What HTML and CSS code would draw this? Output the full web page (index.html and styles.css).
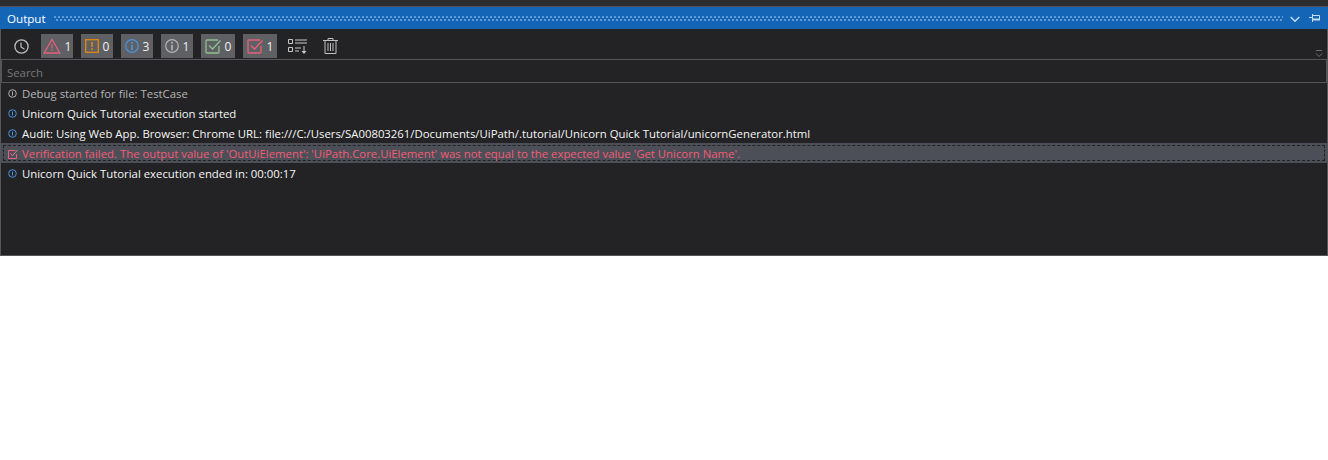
FILE: index.html
```html
<!DOCTYPE html>
<html lang="en">
<head>
<meta charset="utf-8">
<title>Output</title>
<link rel="stylesheet" href="styles.css">
</head>
<body>
<div class="panel">
  <div class="topstrip"></div>
  <header class="titlebar">
    <span class="title">Output</span>
    <span class="grip"></span>
    <svg class="chev" width="10" height="7" viewBox="0 0 10 7"><path d="M.7 1L5 5.300L9.300 1" fill="none" stroke="#c4dcf3" stroke-width="1.4"/></svg>
    <svg class="pin" width="11" height="8" viewBox="0 0 11 8"><path d="M0 3.500H3M3.500 0V8M3.500 1.500H10.500V5.500" fill="none" stroke="#c4dcf3"/><path d="M3.500 4.500H11V6.500H3.500z" fill="#c4dcf3"/></svg>
  </header>
  <div class="toolbar">
    <svg class="clock" width="15" height="15" viewBox="0 0 15 15"><circle cx="7.500" cy="7.500" r="6.600" fill="none" stroke="#c0c0c0" stroke-width="1.300"/><path d="M7 3.500V8L10.500 10.200" fill="none" stroke="#c0c0c0" stroke-width="1.200"/></svg>
    <button class="filter w32"><svg width="18" height="16" viewBox="0 0 18 16"><path d="M9 1.300L16.800 15H1.200Z" fill="none" stroke="#e8607a" stroke-width="1.300"/><path d="M9 6V10.500M9 11.500V13" stroke="#e8607a" stroke-width="1.200"/></svg><span>1</span></button>
    <button class="filter w32"><svg width="14" height="14" viewBox="0 0 14 14"><rect x=".7" y=".7" width="12.600" height="12.600" fill="none" stroke="#e8860c" stroke-width="1.300"/><path d="M7 3V8M7 9.300V11" stroke="#e8860c" stroke-width="1.600"/></svg><span>0</span></button>
    <button class="filter w32"><svg width="14" height="14" viewBox="0 0 14 14"><circle cx="7" cy="7" r="6.300" fill="none" stroke="#4a94da" stroke-width="1.200"/><path d="M7 2.800V4.500M7 5.800V11.200" stroke="#4a94da" stroke-width="1.700"/></svg><span>3</span></button>
    <button class="filter w32"><svg width="14" height="14" viewBox="0 0 14 14"><circle cx="7" cy="7" r="6.300" fill="none" stroke="#b4b4b4" stroke-width="1.200"/><path d="M7 2.800V4.500M7 5.800V11.200" stroke="#b4b4b4" stroke-width="1.700"/></svg><span>1</span></button>
    <button class="filter w34"><svg width="16" height="15" viewBox="0 0 16 15"><path d="M14 7V13A1 1 0 0 1 13 14H2A1 1 0 0 1 1 13V2A1 1 0 0 1 2 1H13" fill="none" stroke="#8fc08f" stroke-width="1.300"/><path d="M4 6.500L7.500 10L15.500 1.500" fill="none" stroke="#8fc08f" stroke-width="1.300"/></svg><span>0</span></button>
    <button class="filter w34"><svg width="16" height="15" viewBox="0 0 16 15"><path d="M14 7V13A1 1 0 0 1 13 14H2A1 1 0 0 1 1 13V2A1 1 0 0 1 2 1H13" fill="none" stroke="#e8607a" stroke-width="1.300"/><path d="M4 6.500L7.500 10L15.500 1.500" fill="none" stroke="#e8607a" stroke-width="1.300"/></svg><span>1</span></button>
    <svg class="sort" width="20" height="17" viewBox="0 0 20 17"><path d="M.5 1.500h4v4h-4zM.5 9.500h4v4h-4z" fill="none" stroke="#c8c8c8"/><path d="M7 2H19M7 5H19M7 10H13M7 13H11M16 8V14" stroke="#c8c8c8" fill="none"/><path d="M13.500 13H18.500L16 16Z" fill="#c8c8c8"/></svg>
    <svg class="trash" width="15" height="16" viewBox="0 0 15 16"><path d="M0 2.500H15M5 2.500V.5H10V2.500M2 2.500V15.500H13V2.500M5 5V13M7.500 5V13M10 5V13" fill="none" stroke="#c0c0c0"/></svg>
    <span class="spacer"></span>
    <svg class="overflow" width="8" height="8" viewBox="0 0 8 8"><path d="M1 .5H7M1 3.500L4 6.500L7 3.500" fill="none" stroke="#707070"/></svg>
  </div>
  <div class="search">Search</div>
  <ul class="log">
    <li class="row muted"><svg class="ri" width="9" height="9" viewBox="0 0 9 9"><circle cx="4.500" cy="4.500" r="3.800" fill="none" stroke="#b4b4b4"/><path d="M4.500 2.500V6.500" stroke="#b4b4b4"/></svg>Debug started for file: TestCase</li>
    <li class="row"><svg class="ri" width="9" height="9" viewBox="0 0 9 9"><circle cx="4.500" cy="4.500" r="3.800" fill="none" stroke="#4a94da"/><path d="M4.500 2.500V6.500" stroke="#4a94da"/></svg>Unicorn Quick Tutorial execution started</li>
    <li class="row"><svg class="ri" width="9" height="9" viewBox="0 0 9 9"><circle cx="4.500" cy="4.500" r="3.800" fill="none" stroke="#4a94da"/><path d="M4.500 2.500V6.500" stroke="#4a94da"/></svg>Audit: Using Web App. Browser: Chrome URL: file:///C:/Users/SA00803261/Documents/UiPath/.tutorial/Unicorn Quick Tutorial/unicornGenerator.html</li>
    <li class="row selected"><svg class="ri" width="10" height="10" viewBox="0 0 10 10"><path d="M8.500 5V9.500H.5V1.500H7.500" fill="none" stroke="#e8607a"/><path d="M2.500 4.500L4.500 6.800L9.500 1" fill="none" stroke="#f07a90"/></svg>Verification failed. The output value of 'OutUiElement': 'UiPath.Core.UiElement' was not equal to the expected value 'Get Unicorn Name'.</li>
    <li class="row"><svg class="ri" width="9" height="9" viewBox="0 0 9 9"><circle cx="4.500" cy="4.500" r="3.800" fill="none" stroke="#4a94da"/><path d="M4.500 2.500V6.500" stroke="#4a94da"/></svg>Unicorn Quick Tutorial execution ended in: 00:00:17</li>
  </ul>
</div>
</body>
</html>
```
FILE: styles.css
```css
* { box-sizing: border-box; }
html, body { margin: 0; padding: 0; background: #fff; }
body { font-family: "Open Sans", "Noto Sans", sans-serif; font-size: 11.36px; }
.panel { width: 1328px; height: 256px; background: #232325; display: flex; flex-direction: column; border-bottom: 1px solid #56565a; border-left: 1px solid #56565a; border-right: 1px solid #56565a; }
.topstrip { height: 7px; margin: 0 -1px; background: #2d2d30; border-bottom: 1px solid #505054; }
.titlebar { height: 22px; margin: 0 -1px; background: #1565b7; display: flex; align-items: center; padding: 0 8px 0 7px; color: #fff; }
.title { font-size: 11.6px; }
.grip { flex: 1; height: 6px; margin: 1px 7px 0 8px; background-image: radial-gradient(circle at 1px 1px, #5f9ad6 .8px, transparent 1px), radial-gradient(circle at 3px 4px, #5f9ad6 .8px, transparent 1px); background-size: 4px 6px; }
.chev { margin-right: 9px; margin-top: 2px; }
.toolbar { height: 30px; display: flex; align-items: center; padding: 5px 0 1px 13px; }
.clock { margin-right: 12px; }
.filter { height: 24px; padding: 0; border: 0; background: #5f6064; color: #f0f0f0; display: flex; align-items: center; justify-content: center; gap: 4px; margin-right: 8px; font: 12px "Open Sans", sans-serif; }
.w32 { width: 32px; }
.w34 { width: 34px; }
.sort { margin-left: 3px; margin-right: 15px; }
.trash { flex: none; }
.spacer { flex: 1; }
.overflow { margin: 16px 4px 0 0; }
.search { height: 24px; border: 1px solid #56565a; color: #77777a; padding: 5px 5px 0; line-height: 16px; }
.log { list-style: none; margin: 0; padding: 0; flex: 1; }
.row { height: 20px; display: flex; align-items: center; color: #f6f6f6; padding: 1px 0 0 7px; white-space: nowrap; line-height: 19px; }
.ri { margin-right: 5px; flex: none; }
.selected .ri { margin-right: 4px; }
.muted { color: #b4b4b4; }
.selected { color: #f25c75; background: #4c4f58; outline: 1px dashed #232325; outline-offset: -3px; }
```
